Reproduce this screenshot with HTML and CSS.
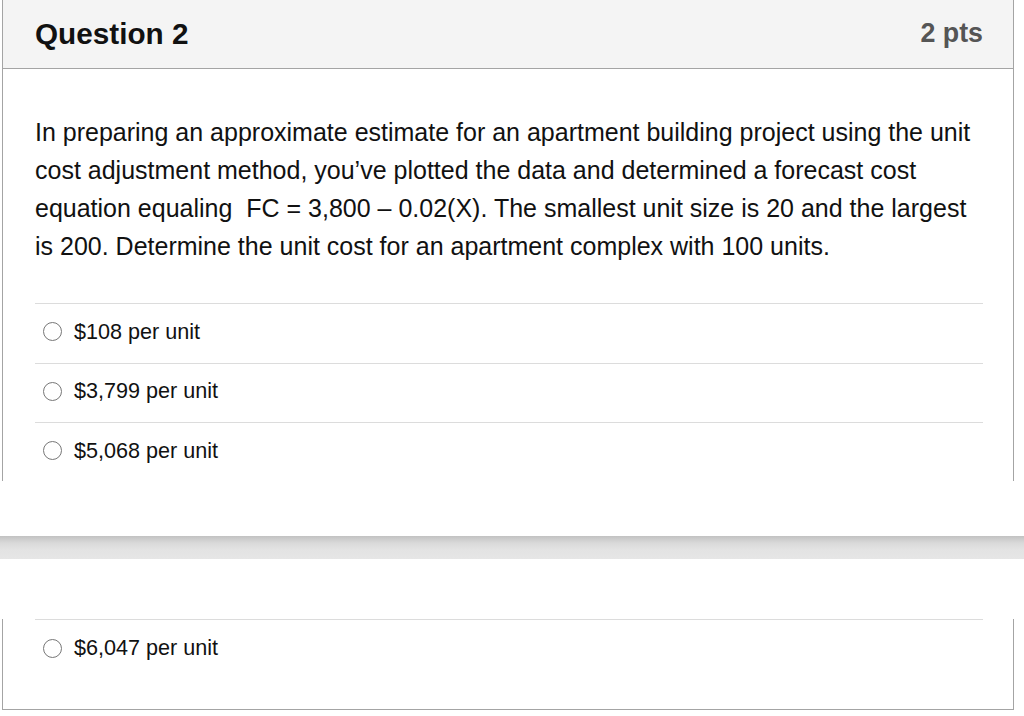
FILE: index.html
```html
<!DOCTYPE html>
<html>
<head>
<meta charset="utf-8">
<title>Question 2</title>
<link rel="stylesheet" href="styles.css">
</head>
<body>
<div class="page">
  <section class="card card-top">
    <header class="header">
      <h2 class="title">Question 2</h2>
      <span class="points">2 pts</span>
    </header>
    <div class="content">
      <p class="question">In preparing an approximate estimate for an apartment building project using the unit<br>cost adjustment method, you’ve plotted the data and determined a forecast cost<br>equation equaling &nbsp;FC = 3,800 – 0.02(X). The smallest unit size is 20 and the largest<br>is 200. Determine the unit cost for an apartment complex with 100 units.</p>
      <div class="answers">
        <label class="answer"><span class="radio"></span><span class="answer-text">$108 per unit</span></label>
        <label class="answer"><span class="radio"></span><span class="answer-text">$3,799 per unit</span></label>
        <label class="answer"><span class="radio"></span><span class="answer-text">$5,068 per unit</span></label>
      </div>
    </div>
  </section>
  <div class="gap-a"></div>
  <div class="divider"></div>
  <div class="gap-b"></div>
  <section class="card card-bottom">
    <div class="content content-bottom">
      <div class="answers">
        <label class="answer"><span class="radio"></span><span class="answer-text">$6,047 per unit</span></label>
      </div>
    </div>
  </section>
</div>
</body>
</html>
```
FILE: styles.css
```css
html, body {
  margin: 0;
  padding: 0;
  background: #ffffff;
}
body {
  font-family: "Liberation Sans", Arial, sans-serif;
  color: #111111;
}
.page {
  width: 1024px;
  height: 716px;
  overflow: hidden;
}
.card {
  box-sizing: border-box;
  margin-left: 2px;
  width: 1012px;
  border-left: 1px solid #a4a4a4;
  border-right: 1px solid #a4a4a4;
}
.card-top {
  height: 481px;
  overflow: hidden;
}
.header {
  box-sizing: border-box;
  height: 69px;
  background: #f4f4f4;
  border-bottom: 1px solid #a4a4a4;
  display: flex;
  justify-content: space-between;
  align-items: center;
  padding: 0 30px 1px 32px;
}
.title {
  margin: 0;
  font-size: 29.7px;
  font-weight: bold;
  color: #111111;
}
.points {
  font-size: 26.8px;
  font-weight: bold;
  color: #555555;
}
.content {
  padding: 44px 30px 0 32px;
}
.question {
  margin: 0 0 38px 0;
  font-size: 25px;
  line-height: 38px;
  white-space: nowrap;
}
.answers {
  display: flex;
  flex-direction: column;
}
.answer {
  box-sizing: border-box;
  height: 59.5px;
  border-top: 1px solid #dcdcdc;
  display: flex;
  align-items: center;
  padding: 0 0 3px 8px;
  gap: 12px;
}
.radio {
  box-sizing: border-box;
  width: 19px;
  height: 19px;
  border: 1.5px solid #777777;
  border-radius: 50%;
  flex: none;
}
.answer-text {
  font-size: 21.6px;
}
.gap-a {
  height: 55px;
}
.divider {
  height: 23px;
  background: linear-gradient(to bottom, #c2c2c2 0%, #d9d9d9 30%, #e3e3e3 60%, #e6e6e6 100%);
}
.gap-b {
  height: 60px;
}
.card-bottom {
  border-bottom: 1px solid #a4a4a4;
}
.content-bottom {
  padding: 0 30px 30px 32px;
}
.content-bottom .answer {
  height: 60px;
}
```
